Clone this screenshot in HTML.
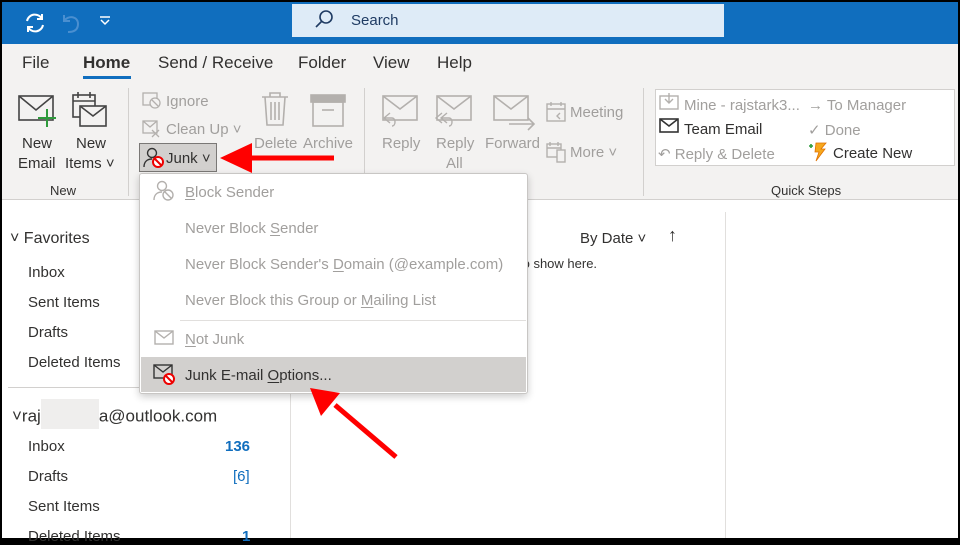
<!DOCTYPE html>
<html><head><meta charset="utf-8"><style>
*{margin:0;padding:0;box-sizing:border-box}
body{width:960px;height:540px;overflow:hidden;background:#000;font-family:"Segoe UI","Liberation Sans",sans-serif;position:relative}
.a{position:absolute;white-space:nowrap}
.g{color:#a19f9d}
.d{color:#323130}
.t{font-size:15px;margin-top:2px}
u{text-decoration:underline;text-underline-offset:2px}
</style></head><body>
<div class="a" style="left:2px;top:2px;width:956px;height:536px;background:#fff"></div>
<!-- title bar -->
<div class="a" style="left:2px;top:2px;width:956px;height:42px;background:#106ebe"></div>
<svg class="a" style="left:24px;top:12px" width="22" height="22" viewBox="0 0 22 22" fill="none" stroke="#fff" stroke-width="2"><path d="M3 9A8 8 0 0 1 18 7"/><path d="M19 13A8 8 0 0 1 4 15"/><path d="M18 2v5h-5"/><path d="M4 20v-5h5"/></svg>
<svg class="a" style="left:61px;top:12px" width="22" height="22" viewBox="0 0 22 22" fill="none" stroke="#4a8fd0" stroke-width="2"><path d="M3 3v6h6"/><path d="M3 9c4-6 14-5 14 3s-8 8-10 8"/></svg>
<svg class="a" style="left:99px;top:16px" width="12" height="10" viewBox="0 0 12 10" fill="none" stroke="#fff" stroke-width="1.5"><path d="M1 1h10"/><path d="M2 4l4 4 4-4"/></svg>
<div class="a" style="left:292px;top:4px;width:432px;height:33px;background:#deebf7"></div>
<svg class="a" style="left:314px;top:9px" width="20" height="20" viewBox="0 0 20 20" fill="none" stroke="#1f3b63" stroke-width="1.6"><circle cx="12" cy="8" r="6"/><path d="M7.5 12.5L2 18"/></svg>
<div class="a" style="left:351px;top:12px;font-size:15px;color:#1f3b63">Search</div>
<!-- tabs + ribbon -->
<div class="a" style="left:2px;top:44px;width:956px;height:156px;background:#f3f2f1"></div>
<div class="a" style="left:2px;top:199px;width:956px;height:1px;background:#d2d0ce"></div>
<div class="a d" style="left:22px;top:53px;font-size:17px">File</div>
<div class="a d" style="left:83px;top:53px;font-size:17px;font-weight:bold">Home</div>
<div class="a" style="left:83px;top:76px;width:48px;height:3px;background:#106ebe"></div>
<div class="a d" style="left:158px;top:53px;font-size:17px">Send / Receive</div>
<div class="a d" style="left:298px;top:53px;font-size:17px">Folder</div>
<div class="a d" style="left:373px;top:53px;font-size:17px">View</div>
<div class="a d" style="left:437px;top:53px;font-size:17px">Help</div>
<!-- New group -->
<svg class="a" style="left:18px;top:95px" width="40" height="32" viewBox="0 0 40 32" fill="none" stroke="#444" stroke-width="1.6"><rect x="1" y="1" width="34" height="24"/><path d="M1 1l17 14L35 1"/><path d="M29 14v18M20 23h18" stroke="#2e9b3c" stroke-width="2"/></svg>
<svg class="a" style="left:71px;top:91px" width="38" height="38" viewBox="0 0 38 38" fill="none" stroke="#444" stroke-width="1.6"><rect x="2" y="4" width="22" height="22"/><path d="M2 10h22M7 1v6M19 1v6"/><rect x="9" y="15" width="26" height="20" fill="#f3f2f1"/><path d="M9 15l13 10 13-10"/></svg>
<div class="a d t" style="left:22px;top:133px">New</div>
<div class="a d t" style="left:18px;top:153px">Email</div>
<div class="a d t" style="left:76px;top:133px">New</div>
<div class="a d t" style="left:65px;top:153px">Items ˅</div>
<div class="a d" style="left:50px;top:183px;font-size:13px">New</div>
<div class="a" style="left:128px;top:88px;width:1px;height:108px;background:#d2d0ce"></div>
<!-- Delete group -->
<svg class="a" style="left:142px;top:92px" width="20" height="18" viewBox="0 0 20 18" fill="none" stroke="#b3b0ad" stroke-width="1.3"><rect x="1" y="1" width="14" height="12"/><circle cx="13" cy="11" r="5" fill="#f3f2f1"/><path d="M10 8l6 6"/></svg>
<div class="a g t" style="left:166px;top:91px">Ignore</div>
<svg class="a" style="left:142px;top:120px" width="20" height="18" viewBox="0 0 20 18" fill="none" stroke="#b3b0ad" stroke-width="1.3"><rect x="1" y="1" width="14" height="12"/><path d="M1 1l7 6 7-6M10 10l7 7M17 10l-7 7"/></svg>
<div class="a g t" style="left:166px;top:119px">Clean Up ˅</div>
<div class="a" style="left:139px;top:143px;width:78px;height:29px;background:#d2d0ce;border:1px solid #7a7876"></div>
<svg class="a" style="left:143px;top:147px" width="22" height="22" viewBox="0 0 22 22" fill="none" stroke="#333" stroke-width="1.4"><circle cx="9" cy="6" r="4.5"/><path d="M1 20c0-6 4-8 8-8"/><circle cx="15" cy="15" r="5" stroke="#e00" stroke-width="2" fill="#fff"/><path d="M11.5 11.5l7 7" stroke="#e00" stroke-width="2"/></svg>
<div class="a d t" style="left:166px;top:148px">Junk ˅</div>
<svg class="a" style="left:260px;top:91px" width="30" height="36" viewBox="0 0 30 36" fill="none" stroke="#b3b0ad" stroke-width="1.6"><path d="M2 6h26M10 6V2h10v4M5 6l2 28h16l2-28M11 11v18M15 11v18M19 11v18"/></svg>
<svg class="a" style="left:310px;top:94px" width="36" height="34" viewBox="0 0 36 34" fill="none" stroke="#b3b0ad" stroke-width="1.6"><rect x="1" y="1" width="34" height="7" fill="#b3b0ad"/><rect x="3" y="8" width="30" height="24"/><path d="M12 16h12"/></svg>
<div class="a g t" style="left:254px;top:133px">Delete</div>
<div class="a g t" style="left:303px;top:133px">Archive</div>
<div class="a" style="left:364px;top:88px;width:1px;height:108px;background:#d2d0ce"></div>
<!-- Respond -->
<svg class="a" style="left:380px;top:95px" width="40" height="36" viewBox="0 0 40 36" fill="none" stroke="#b3b0ad" stroke-width="1.6"><rect x="3" y="1" width="34" height="24"/><path d="M3 1l17 13L37 1"/><path d="M10 18l-6 5 6 5M4 23h8c4 0 4 8 0 8" stroke-width="1.4"/></svg>
<svg class="a" style="left:434px;top:95px" width="40" height="36" viewBox="0 0 40 36" fill="none" stroke="#b3b0ad" stroke-width="1.6"><rect x="3" y="1" width="34" height="24"/><path d="M3 1l17 13L37 1"/><path d="M8 18l-6 5 6 5M13 18l-6 5 6 5M7 23h8c4 0 4 8 0 8" stroke-width="1.4"/></svg>
<svg class="a" style="left:493px;top:95px" width="44" height="36" viewBox="0 0 44 36" fill="none" stroke="#b3b0ad" stroke-width="1.6"><rect x="1" y="1" width="34" height="24"/><path d="M1 1l17 13L35 1"/><path d="M16 29h24M35 23l6 6-6 6"/></svg>
<div class="a g t" style="left:382px;top:133px">Reply</div>
<div class="a g t" style="left:436px;top:133px">Reply</div>
<div class="a g t" style="left:446px;top:153px">All</div>
<div class="a g t" style="left:485px;top:133px">Forward</div>
<svg class="a" style="left:546px;top:101px" width="22" height="22" viewBox="0 0 22 22" fill="none" stroke="#b3b0ad" stroke-width="1.4"><rect x="1" y="3" width="18" height="17"/><path d="M1 8h18M5 1v4M15 1v4M14 12l-3 3 3 3"/></svg>
<div class="a g t" style="left:570px;top:102px">Meeting</div>
<svg class="a" style="left:546px;top:141px" width="22" height="22" viewBox="0 0 22 22" fill="none" stroke="#b3b0ad" stroke-width="1.4"><rect x="1" y="3" width="14" height="13"/><path d="M1 7h14M4 1v4M12 1v4"/><rect x="11" y="9" width="8" height="12" fill="#f3f2f1"/></svg>
<div class="a g t" style="left:570px;top:142px">More ˅</div>
<div class="a" style="left:643px;top:88px;width:1px;height:108px;background:#d2d0ce"></div>
<!-- Quick steps -->
<div class="a" style="left:655px;top:89px;width:300px;height:77px;background:#fff;border:1px solid #d2d0ce"></div>
<svg class="a" style="left:659px;top:93px" width="20" height="18" viewBox="0 0 20 18" fill="none" stroke="#b3b0ad" stroke-width="1.4"><rect x="1" y="3" width="18" height="13"/><path d="M10 0v10M6 6l4 4 4-4"/></svg>
<div class="a g t" style="left:684px;top:95px">Mine - rajstark3...</div>
<div class="a g t" style="left:808px;top:95px">→ To Manager</div>
<svg class="a" style="left:659px;top:118px" width="20" height="16" viewBox="0 0 20 16" fill="none" stroke="#333" stroke-width="1.6"><rect x="1" y="1" width="18" height="13"/><path d="M1 1l9 7 9-7"/></svg>
<div class="a d t" style="left:684px;top:119px">Team Email</div>
<div class="a g t" style="left:808px;top:119px">✓ Done</div>
<div class="a g t" style="left:658px;top:143px">↶ Reply &amp; Delete</div>
<svg class="a" style="left:808px;top:140px" width="20" height="22" viewBox="0 0 20 22"><path d="M1 6h4M3 4v4" stroke="#2e9b3c" stroke-width="1.6"/><path d="M8 3h10l-5 6h4l-9 12 3-9H7z" fill="#f6a81c" stroke="#e07000" stroke-width="0.8"/></svg>
<div class="a d t" style="left:833px;top:143px">Create New</div>
<div class="a d" style="left:771px;top:183px;font-size:13px">Quick Steps</div>
<!-- panes -->
<div class="a" style="left:290px;top:200px;width:1px;height:338px;background:#e1dfdd"></div>
<div class="a" style="left:725px;top:212px;width:1px;height:326px;background:#e1dfdd"></div>
<div class="a d t" style="left:10px;top:228px;font-size:16px">˅ Favorites</div>
<div class="a d t" style="left:28px;top:262px">Inbox</div>
<div class="a d t" style="left:28px;top:292px">Sent Items</div>
<div class="a d t" style="left:28px;top:322px">Drafts</div>
<div class="a d t" style="left:28px;top:352px">Deleted Items</div>
<div class="a" style="left:8px;top:387px;width:282px;height:1px;background:#d2d0ce"></div>
<div class="a d" style="left:12px;top:405px;font-size:17px">˅raj<span style="display:inline-block;width:58px;height:30px;background:#efeeed;vertical-align:middle;margin-top:-6px"></span>a@outlook.com</div>
<div class="a d t" style="left:28px;top:436px">Inbox</div>
<div class="a t" style="left:225px;top:436px;color:#106ebe;font-weight:bold">136</div>
<div class="a d t" style="left:28px;top:466px">Drafts</div>
<div class="a t" style="left:233px;top:466px;color:#106ebe">[6]</div>
<div class="a d t" style="left:28px;top:496px">Sent Items</div>
<div class="a d t" style="left:28px;top:526px">Deleted Items</div>
<div class="a t" style="left:242px;top:526px;color:#106ebe;font-weight:bold">1</div>
<div class="a d t" style="left:580px;top:228px">By Date ˅</div>
<div class="a d" style="left:668px;top:225px;font-size:18px">↑</div>
<div class="a d" style="left:519px;top:256px;font-size:13px">to show here.</div>
<!-- menu -->
<div class="a" style="left:139px;top:173px;width:389px;height:221px;background:#fff;border:1px solid #c8c6c4;border-radius:3px;box-shadow:0 3px 8px rgba(0,0,0,.2)"></div>
<svg class="a" style="left:153px;top:180px" width="22" height="22" viewBox="0 0 22 22" fill="none" stroke="#b3b0ad" stroke-width="1.4"><circle cx="9" cy="6" r="4.5"/><path d="M1 20c0-6 4-8 8-8"/><circle cx="15" cy="15" r="5" fill="#fff"/><path d="M11.5 11.5l7 7"/></svg>
<div class="a g t" style="left:185px;top:182px"><u>B</u>lock Sender</div>
<div class="a g t" style="left:185px;top:218px">Never Block <u>S</u>ender</div>
<div class="a g t" style="left:185px;top:254px">Never Block Sender's <u>D</u>omain (@example.com)</div>
<div class="a g t" style="left:185px;top:290px">Never Block this Group or <u>M</u>ailing List</div>
<div class="a" style="left:180px;top:320px;width:346px;height:1px;background:#e1dfdd"></div>
<svg class="a" style="left:154px;top:330px" width="20" height="15" viewBox="0 0 20 15" fill="none" stroke="#b3b0ad" stroke-width="1.4"><rect x="1" y="1" width="18" height="13"/><path d="M1 1l9 7 9-7"/></svg>
<div class="a g t" style="left:185px;top:329px"><u>N</u>ot Junk</div>
<div class="a" style="left:141px;top:357px;width:385px;height:35px;background:#d2d0ce"></div>
<svg class="a" style="left:153px;top:364px" width="24" height="22" viewBox="0 0 24 22" fill="none" stroke="#333" stroke-width="1.4"><rect x="1" y="1" width="18" height="13"/><path d="M1 1l9 7 9-7"/><circle cx="16" cy="15" r="5" stroke="#e00" stroke-width="2" fill="#fff"/><path d="M12.5 11.5l7 7" stroke="#e00" stroke-width="2"/></svg>
<div class="a d t" style="left:185px;top:365px">Junk E-mail <u>O</u>ptions...</div>
<!-- arrows -->
<svg class="a" style="left:0;top:0" width="960" height="540" viewBox="0 0 960 540"><path d="M250 158H334" stroke="#f00" stroke-width="5"/><path d="M220 158L252 143V173Z" fill="#f00"/><path d="M396 457L335 405" stroke="#f00" stroke-width="5"/><path d="M310 388L340 393L321 416Z" fill="#f00"/></svg>
</body></html>
